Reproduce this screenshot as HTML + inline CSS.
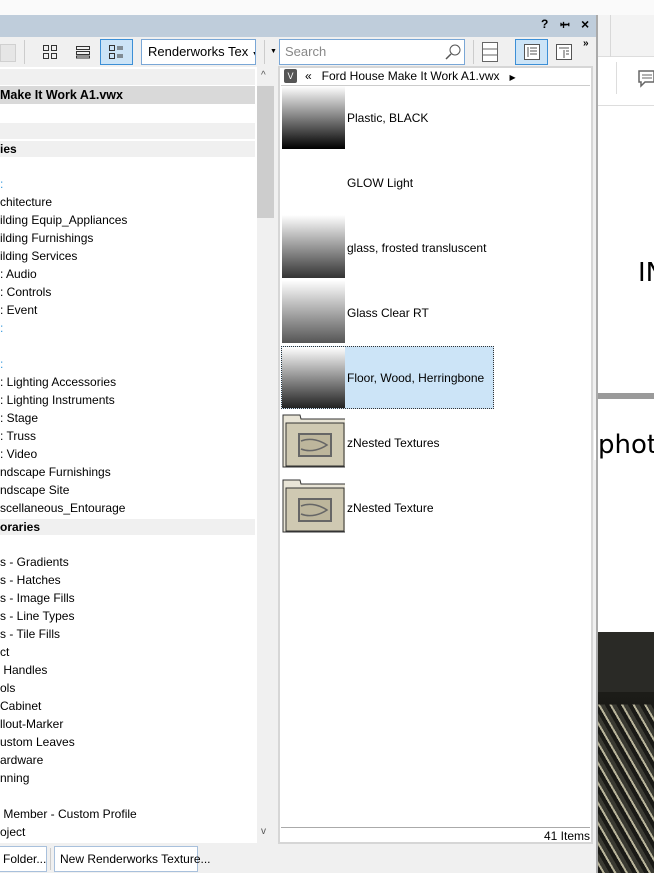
<!DOCTYPE html>
<html><head><style>
*{margin:0;padding:0;box-sizing:border-box}
body{width:654px;height:873px;overflow:hidden;background:#f0f0f0;font-family:"Liberation Sans",sans-serif;font-size:12px;color:#000;position:relative}
.a{position:absolute}
.row{position:absolute;left:0;width:257px;height:18px;line-height:18px;white-space:nowrap;padding-left:0}
.th{position:absolute;left:282px;width:63px;height:63px;background:linear-gradient(#fff,#000)}
.lbl{position:absolute;left:347px;white-space:nowrap}
</style></head><body>
<div class="a" style="left:0;top:0;width:654px;height:15px;background:#fafafa"></div>
<div class="a" style="left:598px;top:15px;width:56px;height:858px;background:#fff"></div>
<div class="a" style="left:598px;top:15px;width:56px;height:42px;background:#f3f3f3;border-bottom:1px solid #ddd"></div>
<div class="a" style="left:610px;top:15px;width:1px;height:42px;background:#d8d8d8"></div>
<div class="a" style="left:598px;top:105px;width:56px;height:1px;background:#ddd"></div>
<div class="a" style="left:616px;top:62px;width:1px;height:32px;background:#ddd"></div>
<svg class="a" style="left:638px;top:70px" width="16" height="20"><path d="M1 1h15v11H7l-4 4v-4H1z" fill="none" stroke="#666" stroke-width="1.5"/><path d="M4 5h10M4 8h10" stroke="#666"/></svg>
<div class="a" style="left:638px;top:258px;font-size:26px;font-family:'DejaVu Sans',sans-serif">IN</div>
<div class="a" style="left:598px;top:393px;width:56px;height:6px;background:#9a9a9a"></div>
<div class="a" style="left:594px;top:430px;font-size:26px;font-family:'DejaVu Sans',sans-serif;background:#fff;padding-left:4px;width:60px;overflow:hidden;white-space:nowrap">photo</div>
<div class="a" style="left:598px;top:632px;width:56px;height:241px;background:linear-gradient(#2a2a26,#1a1a16 30%,transparent 30%),repeating-linear-gradient(60deg,#1a1a16 0 4px,#b8b49a 4px 6px,#3a3a32 6px 10px);"></div>
<div class="a" style="left:598px;top:632px;width:56px;height:60px;background:#2a2a26"></div>
<div class="a" style="left:596px;top:15px;width:2px;height:858px;background:#aaa"></div>
<div class="a" style="left:0;top:15px;width:596px;height:22px;background:#bfcddb"></div>
<div class="a" style="left:541px;top:17px;font-weight:bold;font-size:12px">?</div>
<div class="a" style="left:560px;top:16px;font-weight:bold;font-size:12px">ꟷ</div>
<div class="a" style="left:560px;top:18px;font-size:12px;font-weight:bold">+</div>
<div class="a" style="left:581px;top:16px;font-weight:bold;font-size:14px">×</div>
<div class="a" style="left:0;top:44px;width:16px;height:18px;background:#e6e6e6;border:1px solid #d0d0d0"></div>
<div class="a" style="left:24px;top:40px;width:1px;height:24px;background:#ccc"></div>
<svg class="a" style="left:42px;top:44px" width="16" height="16"><g fill="none" stroke="#333"><rect x="1.5" y="1.5" width="5" height="5"/><rect x="9.5" y="1.5" width="5" height="5"/><rect x="1.5" y="9.5" width="5" height="5"/><rect x="9.5" y="9.5" width="5" height="5"/></g></svg>
<svg class="a" style="left:75px;top:44px" width="16" height="16"><g fill="none" stroke="#333"><rect x="1.5" y="2.5" width="13" height="3"/><rect x="1.5" y="7.5" width="13" height="3"/><rect x="1.5" y="12" width="13" height="2"/></g></svg>
<div class="a" style="left:100px;top:39px;width:33px;height:26px;background:#cce4f7;border:1px solid #3c8fd6"></div>
<svg class="a" style="left:108px;top:44px" width="16" height="16"><g fill="none" stroke="#333"><rect x="1.5" y="1.5" width="5" height="5"/><rect x="1.5" y="9.5" width="5" height="5"/><path d="M9 3h6M9 5h6M9 11h6M9 13h6"/></g></svg>
<div class="a" style="left:141px;top:39px;width:115px;height:26px;background:#fff;border:1px solid #7aa7d6;line-height:24px;padding-left:6px;font-size:13px;white-space:nowrap;overflow:hidden">Renderworks Tex <span style="font-size:7px">▼</span></div>
<div class="a" style="left:264px;top:40px;width:1px;height:24px;background:#ccc"></div>
<div class="a" style="left:270px;top:48px;font-size:7px">▼</div>
<div class="a" style="left:279px;top:39px;width:186px;height:26px;background:#fff;border:1px solid #7aa7d6;line-height:24px;padding-left:5px;color:#888;font-size:13px">Search</div>
<svg class="a" style="left:444px;top:43px" width="18" height="18"><circle cx="11" cy="7" r="5" fill="none" stroke="#555"/><path d="M7 11l-5 5" stroke="#555" stroke-width="1.5"/></svg>
<div class="a" style="left:473px;top:40px;width:1px;height:24px;background:#ccc"></div>
<svg class="a" style="left:482px;top:42px" width="16" height="20"><rect x="0.5" y="0.5" width="15" height="19" fill="#fff" stroke="#666"/><path d="M1 7h14M1 13h14" stroke="#666"/></svg>
<div class="a" style="left:515px;top:39px;width:33px;height:26px;background:#cce4f7;border:1px solid #3c8fd6"></div>
<svg class="a" style="left:524px;top:44px" width="16" height="16"><rect x="0.5" y="0.5" width="15" height="15" fill="#fff" stroke="#555"/><path d="M4 3v10M6 4h7M6 7h7M6 10h7" stroke="#555"/></svg>
<svg class="a" style="left:556px;top:44px" width="16" height="16"><rect x="0.5" y="0.5" width="15" height="15" fill="#fff" stroke="#555"/><path d="M3 4h10M8 6v8M10 7h3M10 10h3" stroke="#555"/></svg>
<div class="a" style="left:583px;top:38px;font-size:10px;font-weight:bold">»</div>
<div class="a" style="left:0;top:67px;width:274px;height:776px;background:#fff"></div>
<div class="a" style="left:257px;top:67px;width:17px;height:776px;background:#f0f0f0"></div>
<div class="a" style="left:257px;top:86px;width:17px;height:132px;background:#cdcdcd"></div>
<div class="a" style="left:261px;top:70px;font-size:10px;color:#555">^</div>
<div class="a" style="left:261px;top:826px;font-size:10px;color:#555">v</div>
<div class="a" style="left:0;top:69px;width:255px;height:16px;background:#f0f0f0"></div>
<div class="a" style="left:0;top:86px;width:255px;height:18px;background:#d9d9d9;font-weight:bold;font-size:12.5px;line-height:18px">Make It Work A1.vwx</div>
<div class="a" style="left:0;top:123px;width:255px;height:16px;background:#f0f0f0"></div>
<div class="a" style="left:0;top:141px;width:255px;height:16px;background:#f0f0f0;font-weight:bold;line-height:16px">ies</div>
<div class="a" style="left:0;top:519px;width:255px;height:16px;background:#f0f0f0;font-weight:bold;line-height:16px">oraries</div>
<div class="row" style="top:175px;color:#3a9bdc">:</div>
<div class="row" style="top:193px">chitecture</div>
<div class="row" style="top:211px">ilding Equip_Appliances</div>
<div class="row" style="top:229px">ilding Furnishings</div>
<div class="row" style="top:247px">ilding Services</div>
<div class="row" style="top:265px">: Audio</div>
<div class="row" style="top:283px">: Controls</div>
<div class="row" style="top:301px">: Event</div>
<div class="row" style="top:319px;color:#3a9bdc">:</div>
<div class="row" style="top:355px;color:#3a9bdc">:</div>
<div class="row" style="top:373px">: Lighting Accessories</div>
<div class="row" style="top:391px">: Lighting Instruments</div>
<div class="row" style="top:409px">: Stage</div>
<div class="row" style="top:427px">: Truss</div>
<div class="row" style="top:445px">: Video</div>
<div class="row" style="top:463px">ndscape Furnishings</div>
<div class="row" style="top:481px">ndscape Site</div>
<div class="row" style="top:499px">scellaneous_Entourage</div>
<div class="row" style="top:553px">s - Gradients</div>
<div class="row" style="top:571px">s - Hatches</div>
<div class="row" style="top:589px">s - Image Fills</div>
<div class="row" style="top:607px">s - Line Types</div>
<div class="row" style="top:625px">s - Tile Fills</div>
<div class="row" style="top:643px">ct</div>
<div class="row" style="top:661px">&nbsp;Handles</div>
<div class="row" style="top:679px">ols</div>
<div class="row" style="top:697px">Cabinet</div>
<div class="row" style="top:715px">llout-Marker</div>
<div class="row" style="top:733px">ustom Leaves</div>
<div class="row" style="top:751px">ardware</div>
<div class="row" style="top:769px">nning</div>
<div class="row" style="top:805px">&nbsp;Member - Custom Profile</div>
<div class="row" style="top:823px">oject</div>
<div class="a" style="left:278px;top:66px;width:315px;height:778px;background:#fff;border:2px solid #d6d6d6"></div>
<div class="a" style="left:281px;top:85px;width:309px;height:1px;background:#ccc"></div>
<div class="a" style="left:284px;top:69px;width:13px;height:14px;background:#555;border-radius:2px;color:#fff;font-size:9px;text-align:center;line-height:14px">V</div>
<div class="a" style="left:305px;top:69px;line-height:14px">«&nbsp;&nbsp; Ford House Make It Work A1.vwx &nbsp;&nbsp;<span style="font-size:8px">▶</span></div>
<div class="th" style="top:86px"></div><div class="lbl" style="top:111px">Plastic, BLACK</div>
<div class="lbl" style="top:176px">GLOW Light</div>
<div class="th" style="top:215px;background:linear-gradient(#fff,#333)"></div><div class="lbl" style="top:241px">glass, frosted transluscent</div>
<div class="th" style="top:280px;background:linear-gradient(#fff,#555)"></div><div class="lbl" style="top:306px">Glass Clear RT</div>
<div class="a" style="left:281px;top:346px;width:213px;height:63px;background:#cce4f7;border:1px dotted #333"></div>
<div class="th" style="top:347px;height:61px;background:linear-gradient(#fff,#222)"></div><div class="lbl" style="top:371px">Floor, Wood, Herringbone</div>
<svg class="a" style="left:282px;top:414px" width="63" height="54"><path d="M1 1h17l1 4h49v48H1z" fill="#e8e4d6" stroke="#333"/><rect x="4" y="9" width="58" height="43" fill="#cfc9b2" stroke="#333"/><rect x="17" y="20" width="32" height="22" fill="#bdb69c" stroke="#666" stroke-width="2"/><path d="M19 27c10-4 20 0 26 4c-6 4-16 8-26 4" fill="none" stroke="#666" stroke-width="1.5"/></svg>
<div class="lbl" style="top:436px">zNested Textures</div>
<svg class="a" style="left:282px;top:479px" width="63" height="54"><path d="M1 1h17l1 4h49v48H1z" fill="#e8e4d6" stroke="#333"/><rect x="4" y="9" width="58" height="43" fill="#cfc9b2" stroke="#333"/><rect x="17" y="20" width="32" height="22" fill="#bdb69c" stroke="#666" stroke-width="2"/><path d="M19 27c10-4 20 0 26 4c-6 4-16 8-26 4" fill="none" stroke="#666" stroke-width="1.5"/></svg>
<div class="lbl" style="top:501px">zNested Texture</div>
<div class="a" style="left:281px;top:827px;width:309px;height:1px;background:#aaa"></div>
<div class="a" style="left:544px;top:829px">41 Items</div>
<div class="a" style="left:0;top:846px;width:47px;height:26px;background:#fff;border:1px solid #a8c0dc;border-left:none;line-height:24px;padding-left:3px;white-space:nowrap;overflow:hidden">Folder...</div>
<div class="a" style="left:50px;top:848px;width:1px;height:22px;background:#ccc"></div>
<div class="a" style="left:54px;top:846px;width:144px;height:26px;background:#fff;border:1px solid #a8c0dc;line-height:24px;padding-left:5px;white-space:nowrap">New Renderworks Texture...</div>
</body></html>
